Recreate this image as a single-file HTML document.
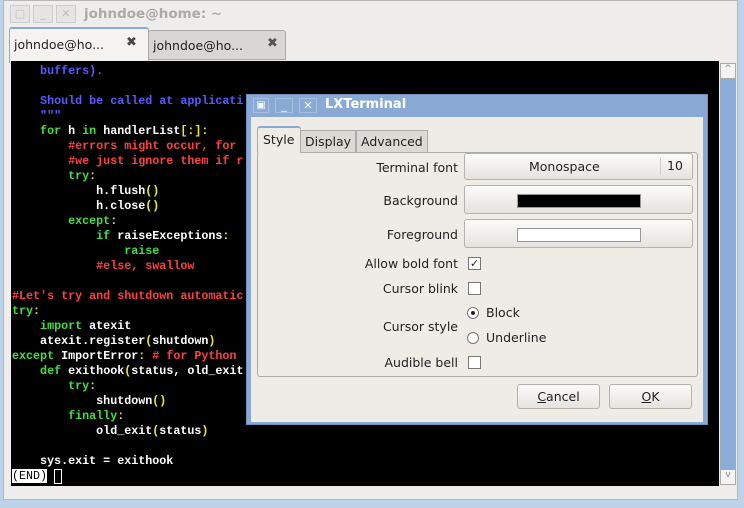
<!DOCTYPE html>
<html><head><style>
*{margin:0;padding:0;box-sizing:border-box}
body{width:744px;height:508px;overflow:hidden;background:#bcd3ea;position:relative;font-family:"DejaVu Sans","Liberation Sans",sans-serif;font-size:12.5px;color:#222}
.abs{position:absolute}
#win{left:3px;top:0;width:735px;height:500px;background:#eeedeb;border:1px solid #b8b8b8}
.tb{top:4px;width:20px;height:18px;border:1px solid #ccc;background:#e6e5e3;color:#bbb;font-size:11px;text-align:center;line-height:16px}
#term{left:11px;top:61px;width:708px;height:425px;background:#000;font-family:"Liberation Mono",monospace;font-weight:bold;font-size:11.7px;line-height:15px;white-space:pre;color:#fff;padding:3px 0 0 1px}
.b{color:#5a5aff}.g{color:#44dd44}.r{color:#ff4040}.y{color:#e8e830}.w{color:#fff}
#dlg{left:246px;top:94px;width:462px;height:331px;background:#8aaad6;border:1px solid #7090c0}
#dlgin{left:4px;top:22px;width:452px;height:305px;background:#efebe7}
.lbl{position:absolute;right:245px;text-align:right;font-size:12.5px;white-space:nowrap}
.btn{position:absolute;border:1px solid #b5b2ad;border-radius:3px;background:linear-gradient(#fbfbfa,#e6e3df)}
.cb{position:absolute;width:13px;height:13px;border:1px solid #777;background:#fff}
</style></head><body>
<div class="abs" style="left:430px;top:0;width:200px;height:4px;background:#7bc04a"></div>
<div id="win" class="abs">
 <div class="abs tb" style="left:6px">□</div>
 <div class="abs tb" style="left:29px">_</div>
 <div class="abs tb" style="left:52px">✕</div>
 <div class="abs" style="left:80px;top:5px;font-weight:bold;color:#aaa;font-size:13.5px">johndoe@home: ~</div>
 <div class="abs" style="left:5px;top:26px;width:140px;height:36px;background:#f4f3f1;border:1px solid #aaa;border-bottom:none;border-top:2px solid #8aaad6;border-radius:3px 3px 0 0"></div>
 <div class="abs" style="left:10px;top:36px;font-size:12.5px">johndoe@ho...</div>
 <div class="abs" style="left:122px;top:34px;font-size:13px;color:#444">✖</div>
 <div class="abs" style="left:144px;top:29px;width:138px;height:30px;background:#d8d7d5;border:1px solid #aaa;border-radius:3px 3px 0 0"></div>
 <div class="abs" style="left:149px;top:37px;font-size:12.5px">johndoe@ho...</div>
 <div class="abs" style="left:263px;top:35px;font-size:13px;color:#555">✖</div>
 <div class="abs" style="left:716px;top:62px;width:16px;height:422px;background:#8aaed8;border:1px solid #9ab"></div>
 <div class="abs" style="left:716px;top:62px;width:16px;height:16px;background:#f4f4f4;border:1px solid #aaa;font-size:9px;text-align:center;color:#888">^</div>
 <div class="abs" style="left:716px;top:468px;width:16px;height:16px;background:#f4f4f4;border:1px solid #aaa;font-size:9px;text-align:center;color:#888">v</div>
</div>
<div id="term" class="abs"><span class="b">    buffers).</span>

<span class="b">    Should be called at applicati</span>
<span class="b">    """</span>
<span class="g">    for</span> h <span class="g">in</span> handlerList<span class="y">[:]</span><span class="y">:</span>
<span class="r">        #errors might occur, for</span>
<span class="r">        #we just ignore them if r</span>
<span class="g">        try</span><span class="y">:</span>
            h.flush<span class="y">()</span>
            h.close<span class="y">()</span>
<span class="g">        except</span><span class="y">:</span>
<span class="g">            if</span> raiseExceptions<span class="y">:</span>
<span class="g">                raise</span>
<span class="r">            #else, swallow</span>

<span class="r">#Let's try and shutdown automatic</span>
<span class="g">try</span><span class="y">:</span>
<span class="g">    import</span> atexit
    atexit.register<span class="y">(</span>shutdown<span class="y">)</span>
<span class="g">except</span> ImportError<span class="y">:</span> <span class="r"># for Python</span>
<span class="g">    def</span> exithook<span class="y">(</span>status, old_exit
<span class="g">        try</span><span class="y">:</span>
            shutdown<span class="y">()</span>
<span class="g">        finally</span><span class="y">:</span>
            old_exit<span class="y">(</span>status<span class="y">)</span>

    sys.exit = exithook
<span style="background:#fff;color:#000;font-weight:normal">(END)</span> <span style="display:inline-block;width:8px;height:15px;border:1px solid #fff;vertical-align:top"></span></div>
<div id="dlg" class="abs">
 <div class="abs" style="left:6px;top:3px;width:16px;height:15px;border:1px solid #a8c0e0;color:#fff;font-size:10px;text-align:center;line-height:13px">▣</div>
 <div class="abs" style="left:28px;top:3px;width:18px;height:15px;border:1px solid #a8c0e0;color:#fff;font-size:11px;text-align:center;line-height:13px">_</div>
 <div class="abs" style="left:52px;top:3px;width:18px;height:15px;border:1px solid #a8c0e0;color:#fff;font-size:11px;text-align:center;line-height:13px">✕</div>
 <div class="abs" style="left:78px;top:2px;color:#fff;font-size:13px;font-weight:bold">LXTerminal</div>
 <div id="dlgin" class="abs">
  <div class="abs" style="left:6px;top:9px;width:44px;height:27px;background:#efebe7;border:1px solid #aaa;border-bottom:none;border-top:2px solid #8aaad6;border-radius:3px 3px 0 0;z-index:2;padding:4px 0 0 5px">Style</div>
  <div class="abs" style="left:49px;top:13px;width:56px;height:23px;background:#dddad6;border:1px solid #aaa;padding:3px 0 0 4px">Display</div>
  <div class="abs" style="left:105px;top:13px;width:72px;height:23px;background:#dddad6;border:1px solid #aaa;padding:3px 0 0 4px">Advanced</div>
  <div class="abs" style="left:6px;top:35px;width:441px;height:225px;border:1px solid #aaa;border-radius:3px"></div>
  <div class="lbl" style="top:43px">Terminal font</div>
  <div class="btn" style="left:213px;top:36px;width:229px;height:27px"><span class="abs" style="left:64px;top:5px">Monospace</span><span class="abs" style="left:195px;top:4px;height:17px;border-left:1px solid #ccc;padding-left:6px">10</span></div>
  <div class="lbl" style="top:76px">Background</div>
  <div class="btn" style="left:213px;top:68px;width:229px;height:29px"><div class="abs" style="left:52px;top:8px;width:124px;height:14px;background:#000;border:1px solid #999"></div></div>
  <div class="lbl" style="top:110px">Foreground</div>
  <div class="btn" style="left:213px;top:102px;width:229px;height:29px"><div class="abs" style="left:52px;top:8px;width:124px;height:14px;background:#fff;border:1px solid #999"></div></div>
  <div class="lbl" style="top:139px">Allow bold font</div>
  <div class="cb" style="left:217px;top:140px;font-size:11px;line-height:11px;text-align:center">✓</div>
  <div class="lbl" style="top:164px">Cursor blink</div>
  <div class="cb" style="left:217px;top:165px"></div>
  <div class="lbl" style="top:202px">Cursor style</div>
  <div class="abs" style="left:216px;top:190px;width:12px;height:12px;border:1px solid #777;border-radius:50%;background:#fff"><div class="abs" style="left:3px;top:3px;width:4px;height:4px;border-radius:50%;background:#222"></div></div>
  <div class="abs" style="left:235px;top:188px">Block</div>
  <div class="abs" style="left:216px;top:215px;width:12px;height:12px;border:1px solid #777;border-radius:50%;background:#fff"></div>
  <div class="abs" style="left:235px;top:213px">Underline</div>
  <div class="lbl" style="top:238px">Audible bell</div>
  <div class="cb" style="left:217px;top:239px"></div>
  <div class="btn" style="left:266px;top:267px;width:83px;height:25px;text-align:center;padding-top:4px"><u>C</u>ancel</div>
  <div class="btn" style="left:358px;top:267px;width:83px;height:25px;text-align:center;padding-top:4px"><u>O</u>K</div>
 </div>
</div>
</body></html>
